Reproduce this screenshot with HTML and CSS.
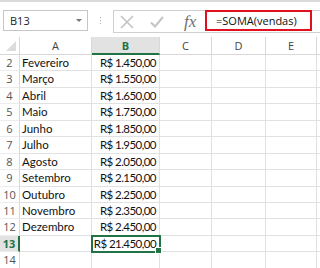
FILE: index.html
```html
<!DOCTYPE html>
<html>
<head>
<meta charset="utf-8">
<link rel="stylesheet" href="styles.css">
</head>
<body>
<div class="topline"></div>
<div class="fbar">
  <div class="namebox"><span class="nb-text">B13</span><span class="nb-arrow"></span></div>
  <div class="dots"><i></i><i></i><i></i></div>
  <div class="fbox">
    <div class="btns">
      <svg class="ic-x" width="14" height="14" viewBox="0 0 14 14"><path d="M1 1L13 13M13 1L1 13" stroke="#c3c3c3" stroke-width="1.6" fill="none"/></svg>
      <svg class="ic-ok" width="14" height="12" viewBox="0 0 14 12"><path d="M1 6.5L5 10.5L13 1" stroke="#c3c3c3" stroke-width="2" fill="none"/></svg>
      <span class="fx">fx</span>
    </div>
    <div class="input">=SOMA(vendas)</div>
  </div>
</div>
<div class="sheet">
  <div class="ch corner"><span class="tri"></span></div>
  <div class="ch">A</div>
  <div class="ch sel">B</div>
  <div class="ch">C</div>
  <div class="ch">D</div>
  <div class="ch">E</div>
  <div class="ch last"></div>

  <div class="rh">2</div><div class="c t">Fevereiro</div><div class="c n">R$ 1.450,00</div><div class="c"></div><div class="c"></div><div class="c"></div><div class="c last"></div>
  <div class="rh">3</div><div class="c t">Março</div><div class="c n">R$ 1.550,00</div><div class="c"></div><div class="c"></div><div class="c"></div><div class="c last"></div>
  <div class="rh">4</div><div class="c t">Abril</div><div class="c n">R$ 1.650,00</div><div class="c"></div><div class="c"></div><div class="c"></div><div class="c last"></div>
  <div class="rh">5</div><div class="c t">Maio</div><div class="c n">R$ 1.750,00</div><div class="c"></div><div class="c"></div><div class="c"></div><div class="c last"></div>
  <div class="rh">6</div><div class="c t">Junho</div><div class="c n">R$ 1.850,00</div><div class="c"></div><div class="c"></div><div class="c"></div><div class="c last"></div>
  <div class="rh">7</div><div class="c t">Julho</div><div class="c n">R$ 1.950,00</div><div class="c"></div><div class="c"></div><div class="c"></div><div class="c last"></div>
  <div class="rh">8</div><div class="c t">Agosto</div><div class="c n">R$ 2.050,00</div><div class="c"></div><div class="c"></div><div class="c"></div><div class="c last"></div>
  <div class="rh">9</div><div class="c t">Setembro</div><div class="c n">R$ 2.150,00</div><div class="c"></div><div class="c"></div><div class="c"></div><div class="c last"></div>
  <div class="rh">10</div><div class="c t">Outubro</div><div class="c n">R$ 2.250,00</div><div class="c"></div><div class="c"></div><div class="c"></div><div class="c last"></div>
  <div class="rh">11</div><div class="c t">Novembro</div><div class="c n">R$ 2.350,00</div><div class="c"></div><div class="c"></div><div class="c"></div><div class="c last"></div>
  <div class="rh">12</div><div class="c t">Dezembro</div><div class="c n">R$ 2.450,00</div><div class="c"></div><div class="c"></div><div class="c"></div><div class="c last"></div>
  <div class="rh rsel">13</div><div class="c t"></div><div class="c n active">R$ 21.450,00<span class="handle"></span></div><div class="c"></div><div class="c"></div><div class="c"></div><div class="c last"></div>
  <div class="rh">14</div><div class="c t"></div><div class="c n"></div><div class="c"></div><div class="c"></div><div class="c"></div><div class="c last"></div>
</div>
</body>
</html>
```
FILE: styles.css
```css
html, body {
  margin: 0;
  padding: 0;
  background: #fff;
  width: 320px;
  height: 268px;
  overflow: hidden;
}
body {
  font-family: "Open Sans", "Liberation Sans", sans-serif;
}
.topline {
  height: 2px;
  background: #dadada;
}
.fbar {
  display: flex;
  align-items: flex-start;
  padding-top: 8px;
  height: 27px;
}
.namebox {
  margin-left: 3px;
  height: 19px;
  border: 1px solid #c6c6c6;
  display: flex;
  align-items: center;
  justify-content: space-between;
  padding: 0 5px 0 6px;
  box-sizing: content-box;
  width: 72px;
}
.nb-text {
  font-size: 11px;
  color: #222;
}
.nb-arrow {
  width: 0;
  height: 0;
  border-left: 3px solid transparent;
  border-right: 3px solid transparent;
  border-top: 3px solid #777;
}
.dots {
  display: flex;
  flex-direction: column;
  gap: 2px;
  margin: 7px 0 0 12px;
}
.dots i {
  display: block;
  width: 1px;
  height: 1px;
  background: #b0b0b0;
}
.fbox {
  margin-left: 12px;
  flex: 1;
  display: flex;
  height: 21px;
  border-top: 1px solid #d0d0d0;
  border-left: 1px solid #d0d0d0;
  border-bottom: 1px solid #d0d0d0;
}
.btns {
  display: flex;
  align-items: center;
  width: 91px;
}
.ic-x {
  margin-left: 6px;
}
.ic-ok {
  margin-left: 16px;
}
.fx {
  margin-left: 20px;
  font-family: "Liberation Serif", serif;
  font-style: italic;
  font-size: 17px;
  color: #707070;
  line-height: 17px;
}
.input {
  width: 94px;
  height: 17px;
  border: 2px solid #e0101f;
  font-size: 11px;
  color: #111;
  line-height: 17px;
  padding-left: 9px;
  box-sizing: content-box;
  margin-top: -1px;
}
.sheet {
  display: grid;
  grid-template-columns: 20px 72px 68px 52px 54px 51px 3px;
  grid-template-rows: 18px;
  grid-auto-rows: 16.44px;
}
.ch {
  font-size: 11px;
  color: #444;
  text-align: center;
  line-height: 17px;
  border-right: 1px solid #d8d8d8;
  border-bottom: 1px solid #d8d8d8;
  box-sizing: border-box;
}
.ch.corner {
  position: relative;
}
.tri {
  position: absolute;
  right: 3px;
  bottom: 3px;
  width: 0;
  height: 0;
  border-left: 10px solid transparent;
  border-bottom: 10px solid #dcdcdc;
}
.ch.sel {
  background: #e2e2e2;
  color: #217346;
  font-weight: bold;
  border-bottom: 2px solid #217346;
}
.ch.last, .c.last {
  border-right: none;
}
.rh {
  font-size: 11px;
  color: #555;
  text-align: center;
  line-height: 16px;
  border-right: 1px solid #d8d8d8;
  border-bottom: 1px solid #ececec;
  box-sizing: border-box;
}
.rh.rsel {
  background: #e2e2e2;
  color: #217346;
  font-weight: bold;
  border-right: 2px solid #217346;
}
.c {
  font-family: "Lato", "Liberation Sans", sans-serif;
  font-size: 11.5px;
  color: #111;
  line-height: 16px;
  border-right: 1px solid #e1e1e1;
  border-bottom: 1px solid #e1e1e1;
  box-sizing: border-box;
  white-space: nowrap;
}
.c.t {
  padding-left: 2px;
}
.c.n {
  text-align: right;
  padding-right: 3px;
  letter-spacing: -0.55px;
}
.c.active {
  position: relative;
  outline: 2px solid #217346;
  outline-offset: -1px;
}
.handle {
  position: absolute;
  right: -3px;
  bottom: -3px;
  width: 5px;
  height: 5px;
  background: #217346;
  border: 1px solid #fff;
  box-sizing: content-box;
}
```
